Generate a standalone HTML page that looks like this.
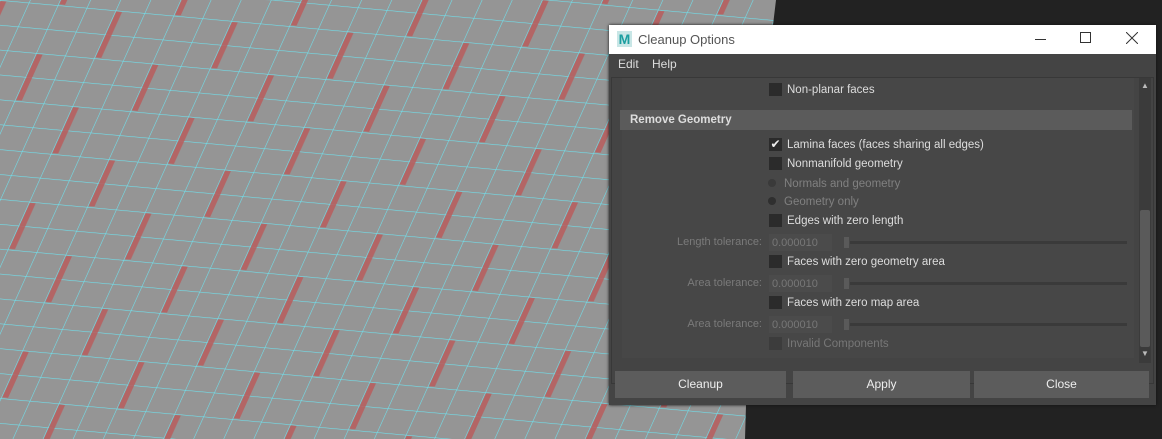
<!DOCTYPE html>
<html><head><style>
*{margin:0;padding:0;box-sizing:border-box}
body{width:1162px;height:439px;overflow:hidden;background:#222;font-family:"Liberation Sans",sans-serif;position:relative}
.abs{position:absolute}
#dlg{left:609px;top:25px;width:547px;height:380px;background:#444;box-shadow:0 0 3px #111}
#title{left:0;top:0;width:547px;height:29px;background:#fff;color:#555;font-size:13px}
#menu{top:29px;left:0;height:22px;width:547px;font-size:12px;color:#ddd}
#frame{left:2px;top:52px;width:543px;height:307px;border:1px solid #383838;background:#444}
#panel{left:10px;top:0px;width:512px;height:280px;background:#474747}
.hdr{background:#5b5b5b;color:#ddd;font-weight:bold;font-size:11.5px;padding:4px 0 0 10px}
.cb{width:13px;height:13px;background:#2b2b2b}
.t{font-size:11.5px;color:#ddd;white-space:nowrap}
.dim{color:#808080}
.lbl{font-size:11px;color:#7a7a7a;text-align:right;width:140px;white-space:nowrap}
.fld{width:63px;height:17px;background:#4b4b4b;font-size:11px;color:#777;padding:3px 0 0 3px}
.trk{height:3px;background:#3a3a3a}
.hnd{width:5px;height:11px;background:#5a5a5a}
.btn{top:346px;height:27px;background:#5c5c5c;color:#eee;font-size:12px;text-align:center;line-height:27px}
</style></head><body>
<svg class="abs" style="left:0;top:0" width="780" height="439">
<defs>
<pattern id="p" width="30" height="24" patternUnits="userSpaceOnUse" patternTransform="skewX(-20) rotate(5)">
<rect width="30" height="24" fill="#959595"/>
<line x1="0" y1="0" x2="0" y2="24" stroke="#6fe2ef" stroke-width="1.2"/>
<line x1="0" y1="0" x2="30" y2="0" stroke="#6fe2ef" stroke-width="1.2"/>
</pattern>
<pattern id="r" width="120" height="96" patternUnits="userSpaceOnUse" patternTransform="skewX(-20) rotate(5)">
<rect x="1" y="1" width="6" height="46" fill="#b85c5c"/>
<rect x="61" y="49" width="6" height="46" fill="#b85c5c"/>
</pattern>
</defs>
<polygon points="0,0 776,0 773,25 746,405 745,439 0,439" fill="url(#p)"/>
<polygon points="0,0 776,0 773,25 746,405 745,439 0,439" fill="url(#r)" opacity="0.85"/>
</svg>
<div id="dlg" class="abs">
 <div id="title" class="abs">
  <div class="abs" style="left:8px;top:6px;width:15px;height:16px;background:#c8e6e6;color:#1a9ea0;font-weight:bold;font-size:14px;line-height:16px;text-align:center">M</div>
  <div class="abs" style="left:29px;top:7px">Cleanup Options</div>
  <div class="abs" style="left:426px;top:14px;width:11px;height:1px;background:#333"></div>
  <div class="abs" style="left:471px;top:7px;width:11px;height:11px;border:1px solid #333"></div>
  <svg class="abs" style="left:517px;top:7px" width="12" height="12"><path d="M0 0L12 12M12 0L0 12" stroke="#333" stroke-width="1"/></svg>
 </div>
 <div id="menu" class="abs"><span class="abs" style="left:9px;top:3px">Edit</span><span class="abs" style="left:43px;top:3px">Help</span></div>
 <div id="frame" class="abs">
  <div id="panel" class="abs"></div>
  <div class="abs cb" style="left:157px;top:5px"></div><div class="abs t" style="left:175px;top:6px">Non-planar faces</div>
  <div class="abs hdr" style="left:8px;top:32px;width:512px;height:20px">Remove Geometry</div>
  <div class="abs" style="left:10px;top:53px;width:510px;height:226px;background:#474747"></div>
  <div class="abs cb" style="left:157px;top:60px;color:#eee;font-size:12px;line-height:13px;text-align:center">✔</div><div class="abs t" style="left:175px;top:61px">Lamina faces (faces sharing all edges)</div>
  <div class="abs cb" style="left:157px;top:79px"></div><div class="abs t" style="left:175px;top:80px">Nonmanifold geometry</div>
  <div class="abs" style="left:156px;top:101px;width:8px;height:8px;border-radius:50%;background:#3a3a3a"></div><div class="abs t dim" style="left:172px;top:100px">Normals and geometry</div>
  <div class="abs" style="left:156px;top:119px;width:8px;height:8px;border-radius:50%;background:#2f2f2f"></div><div class="abs t dim" style="left:172px;top:118px">Geometry only</div>
  <div class="abs cb" style="left:157px;top:136px"></div><div class="abs t" style="left:175px;top:137px">Edges with zero length</div>
  <div class="abs lbl" style="left:10px;top:158px">Length tolerance:</div><div class="abs fld" style="left:157px;top:156px">0.000010</div><div class="abs hnd" style="left:232px;top:159px"></div><div class="abs trk" style="left:238px;top:163px;width:277px"></div>
  <div class="abs cb" style="left:157px;top:177px"></div><div class="abs t" style="left:175px;top:178px">Faces with zero geometry area</div>
  <div class="abs lbl" style="left:10px;top:199px">Area tolerance:</div><div class="abs fld" style="left:157px;top:197px">0.000010</div><div class="abs hnd" style="left:232px;top:200px"></div><div class="abs trk" style="left:238px;top:204px;width:277px"></div>
  <div class="abs cb" style="left:157px;top:218px"></div><div class="abs t" style="left:175px;top:219px">Faces with zero map area</div>
  <div class="abs lbl" style="left:10px;top:240px">Area tolerance:</div><div class="abs fld" style="left:157px;top:238px">0.000010</div><div class="abs hnd" style="left:232px;top:241px"></div><div class="abs trk" style="left:238px;top:245px;width:277px"></div>
  <div class="abs cb" style="left:157px;top:259px;background:#3c3c3c"></div><div class="abs t dim" style="left:175px;top:260px;color:#777">Invalid Components</div>
  <div class="abs" style="left:527px;top:0;width:12px;height:285px;background:#3b3b3b"></div>
  <div class="abs" style="left:529px;top:3px;font-size:8px;color:#bbb">▲</div>
  <div class="abs" style="left:529px;top:271px;font-size:8px;color:#bbb">▼</div>
  <div class="abs" style="left:528px;top:132px;width:10px;height:137px;background:#5a5a5a;border-radius:2px"></div>
 </div>
 <div class="abs btn" style="left:6px;width:171px">Cleanup</div>
 <div class="abs btn" style="left:184px;width:177px">Apply</div>
 <div class="abs btn" style="left:365px;width:175px">Close</div>
</div>
</body></html>
